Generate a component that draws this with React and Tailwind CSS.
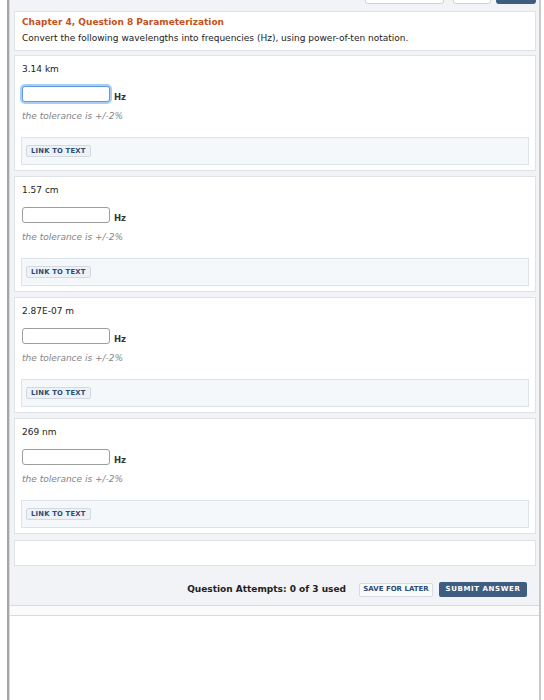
import React from "react";

const parts = [
  { label: "3.14 km", focused: true },
  { label: "1.57 cm" },
  { label: "2.87E-07 m" },
  { label: "269 nm" },
];

function PartBox({ label, focused }) {
  return (
    <div className="bg-white border border-[#dfe2e7] px-[6px] pt-[8px] pb-[5px]">
      <div className="pl-px text-[9px] leading-[11px] text-[#222]">{label}</div>
      <div className="mt-[11px] pl-px flex items-end h-[16px]">
        <div
          className={
            focused
              ? "w-[88px] h-[16px] rounded-[3px] bg-white border border-[#5d9be0] shadow-[0_0_0_2px_#a9cdf4]"
              : "w-[88px] h-[16px] rounded-[3px] bg-white border border-[#9d9d9d]"
          }
        />
        <span className="ml-[4px] text-[8.5px] leading-[11px] font-semibold text-[#333] -mb-px">Hz</span>
      </div>
      <div className="mt-[9px] pl-px text-[9px] leading-[11px] italic text-[#858585]">
        the tolerance is +/-2%
      </div>
      <div className="mt-[15px] h-[28px] bg-[#f5f8fb] border border-[#dde3ea] flex items-center px-[4px]">
        <span className="h-[12px] px-[4px] flex items-center rounded-[2px] bg-[#eef2f7] border border-[#d2d9e2] text-[6.8px] font-bold text-[#2c4b77] tracking-[0.2px]">
          LINK TO TEXT
        </span>
      </div>
    </div>
  );
}

export default function App() {
  return (
    <div className="min-h-screen bg-white pl-[7px]" style={{ fontFamily: '"DejaVu Sans", Verdana, sans-serif' }}>
      <div className="w-[534px] min-h-[700px] border-l-2 border-[#a6a6a6] border-r-2 border-r-[#c9c9c9]">
        <div className="border-l border-[#d9d9d9] min-h-[700px] flex flex-col">
          <div className="bg-[#f1f3f6] border-b border-[#d9dadc]">
            <div className="h-[4px] overflow-hidden flex items-end justify-end pr-[3px]">
              <div className="w-[79px] h-[20px] shrink-0 rounded-[3px] bg-white border border-[#cfd3d8]" />
              <div className="ml-[9px] w-[38px] h-[20px] shrink-0 rounded-[3px] bg-white border border-[#cfd3d8]" />
              <div className="ml-[5px] w-[40px] h-[20px] shrink-0 rounded-[3px] bg-[#3d5d80]" />
            </div>
            <div className="pt-[7px] pl-[4px] pr-[3px] flex flex-col gap-[4px]">
              <div className="bg-white border border-[#dfe2e7] px-[7px] pt-[5px] pb-[6px]">
                <div className="text-[9px] leading-[11px] font-bold text-[#c4501c]">
                  Chapter 4, Question 8 Parameterization
                </div>
                <div className="mt-[5px] text-[9px] leading-[11px] text-[#222]">
                  Convert the following wavelengths into frequencies (Hz), using power-of-ten notation.
                </div>
              </div>
              <div className="flex flex-col gap-[5px]">
                {parts.map((p) => (
                  <PartBox key={p.label} label={p.label} focused={p.focused} />
                ))}
              </div>
              <div className="mt-[2px] h-[26px] bg-white border border-[#dfe2e7]" />
            </div>
            <div className="mt-[16px] pb-[8px] pr-[12px] flex items-center justify-end">
              <span className="text-[9px] font-bold text-[#222]">Question Attempts: 0 of 3 used</span>
              <span className="ml-[13px] h-[14px] w-[74px] flex items-center justify-center rounded-[2px] bg-[#f9fafc] border border-[#d5dbe3] text-[7px] font-bold text-[#2c4b77]">
                SAVE FOR LATER
              </span>
              <span className="ml-[6px] h-[15px] w-[88px] flex items-center justify-center rounded-[2px] bg-[#3f5e7f] text-[7px] font-bold text-white tracking-[0.6px]">
                SUBMIT ANSWER
              </span>
            </div>
          </div>
          <div className="h-[10px] bg-[#fbfbfb] border-b border-[#d9dadc]" />
          <div className="flex-1 bg-white" />
        </div>
      </div>
    </div>
  );
}
